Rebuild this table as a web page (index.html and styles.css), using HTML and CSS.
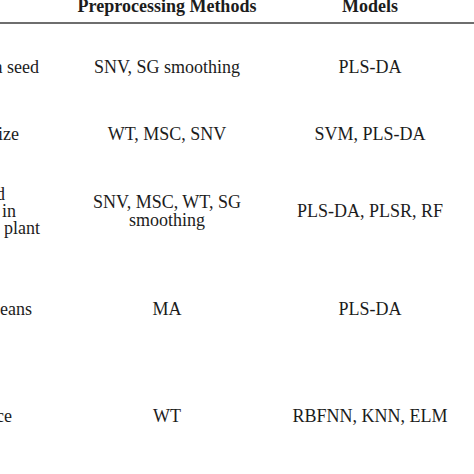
FILE: index.html
```html
<!DOCTYPE html>
<html lang="en">
<head>
<meta charset="utf-8">
<title>Table</title>
<link rel="stylesheet" href="styles.css">
</head>
<body>
<div class="table">
  <div class="th first"></div>
  <div class="th mid">Preprocessing Methods</div>
  <div class="th right">Models</div>

  <div class="td first r1"><div class="frag w39"><span>a seed</span></div></div>
  <div class="td mid r1">SNV, SG smoothing</div>
  <div class="td right r1">PLS-DA</div>

  <div class="td first r2"><div class="frag w19"><span>ize</span></div></div>
  <div class="td mid r2">WT, MSC, SNV</div>
  <div class="td right r2">SVM, PLS-DA</div>

  <div class="td first r3">
    <div class="frag w5"><span>d</span></div>
    <div class="frag w16"><span>in</span></div>
    <div class="frag w40"><span>plant</span></div>
  </div>
  <div class="td mid r3 wrap">SNV, MSC, WT, SG smoothing</div>
  <div class="td right r3">PLS-DA, PLSR, RF</div>

  <div class="td first r4"><div class="frag w32"><span>eans</span></div></div>
  <div class="td mid r4">MA</div>
  <div class="td right r4">PLS-DA</div>

  <div class="td first r5"><div class="frag w12"><span>ce</span></div></div>
  <div class="td mid r5">WT</div>
  <div class="td right r5">RBFNN, KNN, ELM</div>
</div>
</body>
</html>
```
FILE: styles.css
```css
html, body {
  margin: 0;
  padding: 0;
  background: #ffffff;
  overflow: hidden;
}
body {
  font-family: "Liberation Serif", "Times New Roman", serif;
  font-size: 18px;
  color: #1c1c1c;
}
.table {
  display: grid;
  grid-template-columns: 60px 214px 200px;
  grid-template-rows: auto 86px 48px 106px 90px 124px;
  margin-top: -4px;
}
.th {
  font-weight: bold;
  line-height: 20px;
  padding-bottom: 6px;
  border-bottom: 2px solid #6e6e6e;
  text-align: center;
  white-space: nowrap;
}
.td {
  display: flex;
  flex-direction: column;
  justify-content: center;
  line-height: 20px;
}
.mid {
  text-align: center;
  padding: 0 12px;
}
.right {
  text-align: center;
  padding-right: 8px;
}
.wrap {
  line-height: 18px;
}
.first {
  line-height: 17px;
}
.frag {
  display: flex;
  justify-content: flex-end;
  white-space: nowrap;
}
.w5 { width: 5px; }
.w12 { width: 12px; }
.w16 { width: 16px; }
.w19 { width: 19px; }
.w32 { width: 32px; }
.w39 { width: 39px; }
.w40 { width: 40px; }
```
